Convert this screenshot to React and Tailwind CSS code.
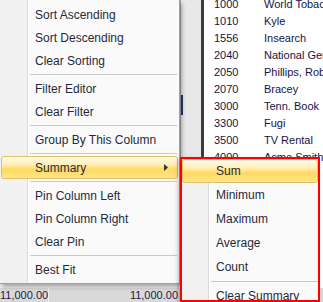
import { Fragment } from 'react';

const menuItems = [
  'Sort Ascending',
  'Sort Descending',
  'Clear Sorting',
  '-',
  'Filter Editor',
  'Clear Filter',
  '-',
  'Group By This Column',
  '-',
  'Summary',
  '-',
  'Pin Column Left',
  'Pin Column Right',
  'Clear Pin',
  '-',
  'Best Fit',
];

const summaryItems = ['Sum', 'Minimum', 'Maximum', 'Average', 'Count', '-', 'Clear Summary'];

const rows = [
  ['1000', 'World Tobacco'],
  ['1010', 'Kyle'],
  ['1556', 'Insearch'],
  ['2040', 'National General'],
  ['2050', 'Phillips, Robert'],
  ['2070', 'Bracey'],
  ['3000', 'Tenn. Book'],
  ['3300', 'Fugi'],
  ['3500', 'TV Rental'],
  ['4000', 'Acme Smith'],
];

const highlight =
  'border border-[#e3c068] rounded-[3px] bg-[linear-gradient(to_bottom,#fffbe6_0%,#fff0b8_35%,#ffd95e_60%,#ffe58f_100%)]';

function MenuRow({ label, active, arrow, height }) {
  return (
    <div className={`${height} px-[1px] flex`}>
      <div
        className={`flex-1 flex items-center pl-[33px] pr-[9px] ${active ? highlight : 'border border-transparent'}`}
      >
        <span className="flex-1 whitespace-nowrap">{label}</span>
        {arrow && (
          <svg width="4" height="7" viewBox="0 0 4 7">
            <polygon points="0,0 4,3.5 0,7" fill="#333" />
          </svg>
        )}
      </div>
    </div>
  );
}

function Separator({ left }) {
  return <div className={`h-px my-[2px] ${left} mr-[2px] bg-[#c9c9c9]`} />;
}

export default function App() {
  return (
    <div
      className="relative w-[323px] h-[302px] overflow-hidden bg-white text-[12px] text-[#1f2a3a]"
      style={{ fontFamily: '"Liberation Sans", Arial, sans-serif' }}
    >
      {/* grid behind the menus */}
      <div className="flex flex-col h-full">
        <div className="flex flex-1 min-h-0">
          <div className="w-[180px] bg-[#f0f0f0]" />
          <div className="w-[21px] bg-[#e8e8e8] border-l border-[#a8a8a8]">
            <div className="mt-[95px] h-[20px] w-[2px] bg-[#203b6e]" />
          </div>
          <div className="w-[3px] bg-[#3c3c3c]" />
          <div className="flex-1 min-w-0 bg-white overflow-hidden text-[11px] text-[#141446]">
            <div className="-mt-[4px]">
              {rows.map(([id, name]) => (
                <div key={id} className="h-[17px] flex items-center whitespace-nowrap">
                  <span className="shrink-0 w-[60px] pl-[10px]">{id}</span>
                  <span className="shrink-0">{name}</span>
                </div>
              ))}
            </div>
          </div>
        </div>
        <div className="h-[14px] flex bg-[#d9d9d9] text-[11px] text-[#1b1b4b] leading-[14px]">
          <div className="w-[49px] text-right pr-[2px] border-r border-[#f4f4f4]">11,000.00</div>
          <div className="w-[131px] text-right pr-[2px]">11,000.00</div>
          <div className="flex-1" />
        </div>
      </div>

      {/* main context menu */}
      <div className="absolute left-0 top-0 w-[180px] pt-[3px] pb-[2px] border-r border-b border-[#a0a0a0] shadow-[2px_3px_4px_rgba(0,0,0,0.3)] bg-[linear-gradient(to_right,#f1f1f1_27px,#dadada_27px,#dadada_28px,#ffffff_28px,#ffffff_29px,#fafafa_29px)]">
        {menuItems.map((item, i) =>
          item === '-' ? (
            <Separator key={i} left="ml-[30px]" />
          ) : (
            <MenuRow
              key={i}
              label={item}
              height="h-[23px]"
              active={item === 'Summary'}
              arrow={item === 'Summary'}
            />
          )
        )}
      </div>

      {/* summary sub menu */}
      <div className="absolute left-[180px] top-[157px] w-[140px] h-[150px] pt-[2px] shadow-[-2px_2px_4px_rgba(0,0,0,0.25)] bg-[linear-gradient(to_right,#f1f1f1_28px,#dadada_28px,#dadada_29px,#ffffff_29px,#ffffff_30px,#fafafa_30px)]">
        {summaryItems.map((item, i) => (
          <Fragment key={i}>
            {item === '-' ? (
              <Separator left="ml-[31px]" />
            ) : (
              <div className="px-[1px]">
                <MenuRow label={item} height="h-[24px]" active={item === 'Sum'} />
              </div>
            )}
          </Fragment>
        ))}
      </div>

      {/* red annotation frame */}
      <div className="absolute left-[180px] top-[157px] w-[140px] h-[145px] border-2 border-[#ff0000]" />
    </div>
  );
}
